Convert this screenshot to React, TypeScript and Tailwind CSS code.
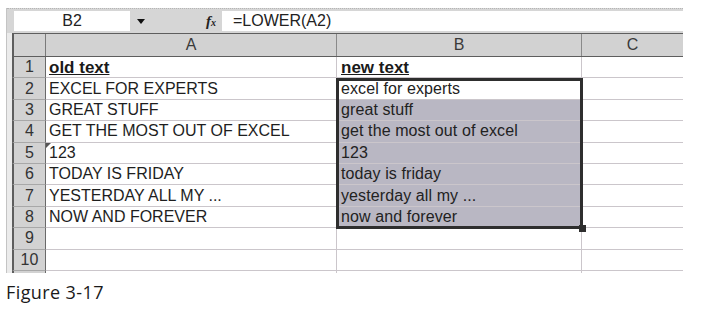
import React from "react";

const rows: [string, string][] = [
  ["old text", "new text"],
  ["EXCEL FOR EXPERTS", "excel for experts"],
  ["GREAT STUFF", "great stuff"],
  ["GET THE MOST OUT OF EXCEL", "get the most out of excel"],
  ["123", "123"],
  ["TODAY IS FRIDAY", "today is friday"],
  ["YESTERDAY ALL MY ...", "yesterday all my ..."],
  ["NOW AND FOREVER", "now and forever"],
  ["", ""],
  ["", ""],
  ["", ""],
];

export default function App() {
  return (
    <div className="w-[702px] h-[317px] bg-white overflow-hidden font-['Liberation_Sans',Arial,sans-serif] text-[#1e1e1e]">
      <div className="ml-[6px] mt-[8px] w-[677px] h-[265px] overflow-hidden border-l border-[#c4c4c4]">
        {/* formula bar */}
        <div className="flex h-[25px] border-t border-dotted border-[#b5b5b5] bg-[#d6d6d6] pt-[2px]">
          <div className="ml-[7px] w-[116px] h-[20px] bg-white flex items-center justify-center text-[16px] text-[#222] leading-none">
            B2
          </div>
          <div className="w-[92px] h-[20px] flex items-center justify-between pl-[7px] pr-[6px]">
            <svg width="8" height="5" viewBox="0 0 8 5">
              <path d="M0 0 L8 0 L4 5 Z" fill="#111" />
            </svg>
            <span className="font-['Liberation_Serif',serif] italic font-bold text-[15px] leading-none text-[#222]">
              f<span className="text-[10px]">x</span>
            </span>
          </div>
          <div className="flex-1 h-[20px] bg-white flex items-center pl-[11px] text-[16px] leading-none text-[#222]">
            =LOWER(A2)
          </div>
        </div>
        {/* grid area */}
        <div className="flex">
          <div className="w-[5px] bg-[#ebebeb]" />
          <div className="relative flex flex-col">
            <div className="flex h-[24px] border-y border-[#5e5e5e] bg-[#d2d2d2] text-[16px] text-[#3a3a3a]">
              <div className="w-[34px] border-l-2 border-l-[#5e5e5e] border-r border-r-[#7a7a7a]" />
              <div className="w-[291px] border-r border-[#8a8a8a] flex items-center justify-center">A</div>
              <div className="w-[245px] border-r border-[#8a8a8a] flex items-center justify-center">B</div>
              <div className="w-[101px] flex items-center justify-center">C</div>
            </div>
            {rows.map(([a, b], i) => {
              const n = i + 1;
              const sel = n >= 3 && n <= 8;
              const bold = n === 1;
              return (
                <div key={n} className="flex h-[21.4px] shrink-0">
                  <div className="w-[34px] border-l-2 border-l-[#5e5e5e] border-r border-r-[#6a6a6a] border-b border-b-[#a8a8a8] bg-[#d2d2d2] flex items-center justify-center text-[16px] leading-none text-[#333]">
                    {n <= 10 ? n : ""}
                  </div>
                  <div className="relative w-[291px] border-r border-b border-[#cbc6cb] flex items-center pl-[3px] whitespace-nowrap">
                    {n === 5 && (
                      <svg className="absolute left-0 top-0" width="5" height="5" viewBox="0 0 5 5">
                        <path d="M0 0 L5 0 L0 5 Z" fill="#555" />
                      </svg>
                    )}
                    {bold ? (
                      <span className="font-bold underline text-[17px] leading-none text-[#1a1a1a]">{a}</span>
                    ) : (
                      <span className="text-[16px] leading-none">{a}</span>
                    )}
                  </div>
                  <div
                    className={`w-[245px] border-r border-b border-[#cbc6cb] flex items-center pl-[4px] whitespace-nowrap ${
                      sel ? "bg-[#b9b7c3]" : "bg-white"
                    }`}
                  >
                    {bold ? (
                      <span className="font-bold underline text-[17px] leading-none text-[#1a1a1a]">{b}</span>
                    ) : (
                      <span className="text-[16px] leading-none tracking-[0.1px] text-[#222]">{b}</span>
                    )}
                  </div>
                  <div className="w-[101px] border-b border-[#cbc6cb]" />
                </div>
              );
            })}
            {/* selection border */}
            <div className="absolute left-[324px] top-[45px] w-[247px] h-[151px] border-[3px] border-[#2e2e2e] pointer-events-none" />
            <div className="absolute left-[567px] top-[192px] w-[7px] h-[7px] bg-[#2e2e2e]" />
          </div>
        </div>
      </div>
      <div className="ml-[6px] mt-[10px] font-['Open_Sans',sans-serif] text-[18px] leading-none tracking-[0.4px] text-[#1a1a1a]">
        Figure 3-17
      </div>
    </div>
  );
}
